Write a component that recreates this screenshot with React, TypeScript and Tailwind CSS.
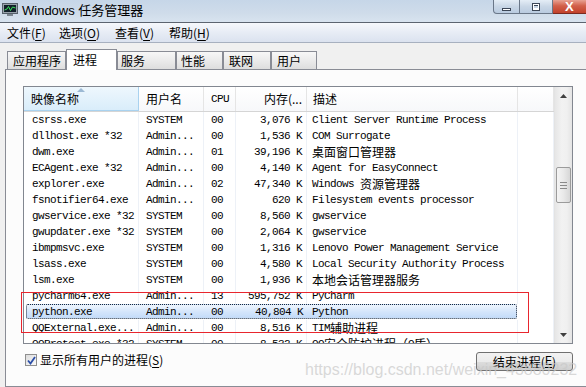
import React from 'react';

type Row = { name: string; user: string; cpu: string; mem: string; desc: string };

const rows: Row[] = [
  { name: 'csrss.exe', user: 'SYSTEM', cpu: '00', mem: '3,076 K', desc: 'Client Server Runtime Process' },
  { name: 'dllhost.exe *32', user: 'Admin...', cpu: '00', mem: '1,536 K', desc: 'COM Surrogate' },
  { name: 'dwm.exe', user: 'Admin...', cpu: '01', mem: '39,196 K', desc: '桌面窗口管理器' },
  { name: 'ECAgent.exe *32', user: 'Admin...', cpu: '00', mem: '4,140 K', desc: 'Agent for EasyConnect' },
  { name: 'explorer.exe', user: 'Admin...', cpu: '02', mem: '47,340 K', desc: 'Windows 资源管理器' },
  { name: 'fsnotifier64.exe', user: 'Admin...', cpu: '00', mem: '620 K', desc: 'Filesystem events processor' },
  { name: 'gwservice.exe *32', user: 'SYSTEM', cpu: '00', mem: '8,560 K', desc: 'gwservice' },
  { name: 'gwupdater.exe *32', user: 'SYSTEM', cpu: '00', mem: '2,064 K', desc: 'gwservice' },
  { name: 'ibmpmsvc.exe', user: 'SYSTEM', cpu: '00', mem: '1,316 K', desc: 'Lenovo Power Management Service' },
  { name: 'lsass.exe', user: 'SYSTEM', cpu: '00', mem: '4,580 K', desc: 'Local Security Authority Process' },
  { name: 'lsm.exe', user: 'SYSTEM', cpu: '00', mem: '1,936 K', desc: '本地会话管理器服务' },
  { name: 'pycharm64.exe', user: 'Admin...', cpu: '13', mem: '595,752 K', desc: 'PyCharm' },
  { name: 'python.exe', user: 'Admin...', cpu: '00', mem: '40,804 K', desc: 'Python' },
  { name: 'QQExternal.exe...', user: 'Admin...', cpu: '00', mem: '8,516 K', desc: 'TIM辅助进程' },
  { name: 'QQProtect.exe *32', user: 'SYSTEM', cpu: '00', mem: '8,532 K', desc: 'QQ安全防护进程（Q盾）' },
];

// CJK runs get the wider CJK font, the rest stays in the mono face
function Mixed({ text }: { text: string }) {
  const parts = text.split(/([\u3000-\u9fff\uff00-\uffef]+)/);
  return (
    <>
      {parts.map((p, i) =>
        /[\u3000-\u9fff\uff00-\uffef]/.test(p) ? (
          <span
            key={i}
            className="inline-block align-top h-[16px] leading-[16px] text-[12px] tracking-normal font-['Noto_Sans_CJK_SC',sans-serif]"
          >
            {p}
          </span>
        ) : (
          <span key={i} className="inline-block align-top h-[16px] leading-[16px] whitespace-pre">
            {p}
          </span>
        )
      )}
    </>
  );
}

function AppIcon() {
  return (
    <svg width="16" height="14" viewBox="0 0 16 14">
      <rect x="0.5" y="0.5" width="15" height="10" fill="#9aa3ad" stroke="#55606b" />
      <rect x="2" y="2" width="12" height="7" fill="#10202a" />
      <polyline points="2.5,7 5,6 6.5,3.5 8.5,7.5 10.5,4 13.5,5" fill="none" stroke="#39e05a" strokeWidth="1" />
      <rect x="5" y="11" width="6" height="2" fill="#7c8690" />
    </svg>
  );
}

function MenuItem({ label, k, w }: { label: string; k: string; w: string }) {
  return (
    <div className={`${w} leading-[19px]`}>
      {label}(<span className="underline underline-offset-2">{k}</span>)
    </div>
  );
}

const tabs = [
  { label: '应用程序', w: 'w-[59px]', pl: 'pl-[5px]' },
  { label: '进程', w: 'w-[51px]', pl: 'pl-[6px]', active: true },
  { label: '服务', w: 'w-[59px]', pl: 'pl-[3px]' },
  { label: '性能', w: 'w-[47px]', pl: 'pl-[4px]' },
  { label: '联网', w: 'w-[48px]', pl: 'pl-[5px]' },
  { label: '用户', w: 'w-[46px]', pl: 'pl-[5px]' },
];

export default function App() {
  const mono = "font-['Liberation_Mono','Noto_Sans_CJK_SC',monospace] text-[11px] tracking-[-0.6px] text-black";
  const sep = 'border-r border-[#edf1f7]';

  return (
    <div className="relative w-[586px] h-[387px] overflow-hidden bg-[#f0f0f0] text-[12px] text-black font-['Noto_Sans_CJK_SC','Liberation_Sans',sans-serif]">
      {/* title bar */}
      <div className="h-[22px] flex items-start bg-[linear-gradient(180deg,#c6d6e8_0%,#cfdcea_60%,#d8e3ef_100%)]">
        <div className="pl-[2px] pt-[3px]">
          <AppIcon />
        </div>
        <div className="pl-[4px] pt-[2px] text-[13px] leading-[17px] font-['Liberation_Sans','Noto_Sans_CJK_SC',sans-serif]">
          Windows 任务管理器
        </div>
        <div className="ml-auto flex h-[14px]">
          <div className="w-[27px] h-full rounded-bl-[4px] border border-t-0 border-[#6a7788] bg-[linear-gradient(180deg,#e4edf6,#c9d7e6_50%,#b9cbe0)] flex items-end justify-center pb-[2px]">
            <div className="w-[9px] h-[3px] bg-white border border-[#3c4656]" />
          </div>
          <div className="w-[33px] h-full border border-t-0 border-l-0 border-[#6a7788] bg-[linear-gradient(180deg,#e4edf6,#c9d7e6_50%,#b9cbe0)] flex items-center justify-center">
            <div className="w-[8px] h-[8px] border border-[#3c4656] bg-white flex items-center justify-center">
              <div className="w-[4px] h-[3px] bg-[#c9d7e6] border-t border-[#3c4656]" />
            </div>
          </div>
          <div className="w-[33px] h-full border-b border-[#7a2a20] bg-[linear-gradient(180deg,#e8a293,#d2604a_45%,#c2412b)] flex items-center pl-[12px] text-white text-[13px] font-bold leading-none font-['Liberation_Sans',sans-serif]">
            X
          </div>
        </div>
      </div>

      {/* menu bar */}
      <div className="h-[21px] border-t border-b border-t-[#5c6470] border-b-[#a7b0bf] bg-[linear-gradient(180deg,#f6f8fc,#e7ecf5_50%,#dbe2ef)] flex pl-[7px]">
        <MenuItem label="文件" k="F" w="w-[52px]" />
        <MenuItem label="选项" k="O" w="w-[56px]" />
        <MenuItem label="查看" k="V" w="w-[54px]" />
        <MenuItem label="帮助" k="H" w="w-[54px]" />
      </div>

      {/* tabs */}
      <div className="h-[26px] flex items-end pl-[7px]">
        {tabs.map((t) =>
          t.active ? (
            <div
              key={t.label}
              className={`${t.w} ${t.pl} relative z-10 -mb-px h-[21px] border border-b-0 border-[#898c95] bg-white leading-[17px] pt-px`}
            >
              {t.label}
            </div>
          ) : (
            <div
              key={t.label}
              className={`${t.w} ${t.pl} h-[18px] border border-b-0 border-[#898c95] bg-[linear-gradient(180deg,#f7f7f7,#ebebeb_50%,#dedede)] leading-[18px]`}
            >
              {t.label}
            </div>
          )
        )}
      </div>

      {/* tab page */}
      <div className="ml-[5px] h-[318px] border border-r-0 border-[#898c95] bg-[#fcfcfc] pl-[17px] pt-[16px]">
        <div className="w-[550px] h-[258px] border border-[#828790] bg-white flex">
          <div className="w-[530px] overflow-hidden">
            {/* header */}
            <div className="h-[25px] flex border-b border-[#d5d5d5] bg-[linear-gradient(180deg,#ffffff,#f7f8fa)]">
              <div className="relative w-[115px] h-full pl-[7px] leading-[24px] border-r border-b border-[#a9d2ef] bg-[linear-gradient(180deg,#eef7fd,#d9edfa)]">
                映像名称
                <svg className="absolute left-[53px] top-[1px]" width="8" height="4" viewBox="0 0 8 4">
                  <path d="M0,4 L4,0 L8,4 Z" fill="#9cb9d4" />
                </svg>
              </div>
              <div className="w-[65px] h-full pl-[7px] leading-[24px] border-r border-[#e5e5e5]">用户名</div>
              <div className="w-[32px] h-full pl-[7px] leading-[24px] border-r border-[#e5e5e5] font-['Liberation_Mono',monospace] text-[11px] tracking-[-0.6px]">
                CPU
              </div>
              <div className="w-[71px] h-full pr-[4px] leading-[24px] border-r border-[#e5e5e5] text-right">
                内存(...
              </div>
              <div className="w-[211px] h-full pl-[6px] leading-[24px] border-r border-[#e5e5e5]">描述</div>
              <div className="w-[36px] h-full border-r border-[#e5e5e5]" />
            </div>

            {/* rows */}
            {rows.map((r) => {
              const sel = r.name === 'python.exe';
              return (
                <div key={r.name} className={`relative h-[16px] flex leading-[16px] ${mono}`}>
                  {sel && (
                    <div className="absolute left-[2px] top-0 w-[491px] h-[15px] rounded-[2px] border border-dotted border-[#1c2a3c] bg-[linear-gradient(180deg,#eef5fd,#d5e6fb_50%,#c3dbf8)]" />
                  )}
                  <div className={`relative w-[115px] pl-[8px] whitespace-nowrap ${sel ? '' : sep}`}>{r.name}</div>
                  <div className={`relative w-[65px] pl-[7px] whitespace-nowrap ${sel ? '' : sep}`}>{r.user}</div>
                  <div className={`relative w-[32px] pl-[7px] ${sel ? '' : sep}`}>{r.cpu}</div>
                  <div className={`relative w-[71px] pr-[4px] text-right whitespace-nowrap ${sel ? '' : sep}`}>{r.mem}</div>
                  <div className={`relative w-[211px] h-[16px] pl-[5px] whitespace-nowrap overflow-hidden ${sel ? '' : sep}`}>
                    <Mixed text={r.desc} />
                  </div>
                  <div className={`w-[36px] ${sep}`} />
                </div>
              );
            })}
          </div>

          {/* scrollbar */}
          <div className="w-[18px] h-full flex flex-col border-l border-[#e3e3e3] bg-[linear-gradient(90deg,#e6e6e6,#f2f2f2_40%,#f0f0f0_70%,#e4e4e4)]">
            <div className="h-[17px] flex items-center justify-center">
              <svg width="7" height="4" viewBox="0 0 7 4">
                <path d="M0,4 L3.5,0 L7,4 Z" fill="#404040" />
              </svg>
            </div>
            <div className="h-[63px]" />
            <div className="mx-px h-[36px] rounded-[2px] border border-[#9b9b9b] bg-[linear-gradient(90deg,#f4f4f4,#e9e9e9_50%,#d7d7d7)] flex flex-col items-center justify-center gap-[2px]">
              <div className="w-[7px] h-px bg-[#8a8a8a]" />
              <div className="w-[7px] h-px bg-[#8a8a8a]" />
              <div className="w-[7px] h-px bg-[#8a8a8a]" />
            </div>
            <div className="flex-1" />
            <div className="h-[17px] flex items-center justify-center">
              <svg width="7" height="4" viewBox="0 0 7 4">
                <path d="M0,0 L3.5,4 L7,0 Z" fill="#404040" />
              </svg>
            </div>
          </div>
        </div>

        {/* bottom controls */}
        <div className="w-[550px] mt-[8px] flex items-start justify-between">
          <div className="flex items-center ml-[2px] mt-[2px] h-[12px]">
            <div className="w-[12px] h-[12px] border border-[#8f8f8f] bg-[linear-gradient(135deg,#dcdcdc,#fafafa)] flex items-center justify-center">
              <svg width="9" height="9" viewBox="0 0 9 9">
                <path d="M1,4.5 L3.5,7.5 L8,1" fill="none" stroke="#2c4fa8" strokeWidth="1.8" />
              </svg>
            </div>
            <div className="pl-[3px] leading-[14px]">
              显示所有用户的进程(<span className="underline underline-offset-2">S</span>)
            </div>
          </div>
          <div className="w-[97px] h-[19px] rounded-[3px] border border-[#707070] bg-[linear-gradient(180deg,#f2f2f2,#ebebeb_50%,#dddddd_51%,#cfcfcf)] flex items-center justify-center leading-none">
            结束进程(<span className="underline underline-offset-2 font-['Liberation_Mono',monospace]">E</span>)
          </div>
        </div>
      </div>

      {/* red annotation box */}
      <div className="absolute left-[21px] top-[292px] w-[508px] h-[41px] border border-[#e8262e]" />

      {/* watermark */}
      <div className="absolute left-[305px] top-[361px] text-[16px] leading-[18px] text-[#c8c8c8]/70 font-['Liberation_Sans',sans-serif] pointer-events-none">
        https://blog.csdn.net/weixin_43880232
      </div>
    </div>
  );
}
